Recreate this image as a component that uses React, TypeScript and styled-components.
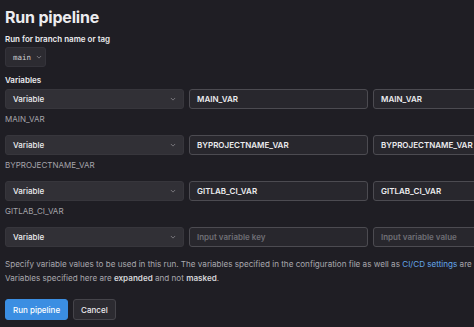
import React from 'react'
import styled, { createGlobalStyle } from 'styled-components'

type VariableRow = {
  key: string
  value: string
  showName: boolean
}

const rows: VariableRow[] = [
  { key: 'MAIN_VAR', value: 'MAIN_VAR', showName: true },
  { key: 'BYPROJECTNAME_VAR', value: 'BYPROJECTNAME_VAR', showName: true },
  { key: 'GITLAB_CI_VAR', value: 'GITLAB_CI_VAR', showName: true },
  { key: '', value: '', showName: false },
]

const GlobalStyle = createGlobalStyle`
  html, body {
    margin: 0;
    background: #1f1e24;
    overflow: hidden;
  }
  body {
    font-family: Inter, "Noto Sans", sans-serif;
    color: #ececef;
  }
`

const Page = styled.div`
  width: 560px;
  height: 327px;
  padding: 0 5px;
  box-sizing: border-box;
  background: #1f1e24;
`

const Title = styled.h1`
  margin: 0;
  padding-top: 7px;
  font-size: 16px;
  line-height: 20px;
  font-weight: 700;
  color: #ececef;
  letter-spacing: -0.2px;
`

const Label = styled.div<{ $top: number }>`
  margin-top: ${(p) => p.$top}px;
  font-size: 8px;
  line-height: 12px;
  font-weight: 600;
  color: #ececef;
`

const BranchSelect = styled.div`
  margin-top: 2px;
  width: 41px;
  height: 20px;
  box-sizing: border-box;
  display: flex;
  align-items: center;
  gap: 5px;
  padding-left: 7px;
  background: #2c2b31;
  border: 1px solid #34333a;
  border-radius: 3px;
  font-family: "DejaVu Sans Mono", "Liberation Mono", monospace;
  font-size: 7.5px;
  color: #cfcfd3;
`

const VarBlock = styled.div<{ $named: boolean }>`
  margin-top: ${(p) => (p.$named ? 3 : 2)}px;
  margin-bottom: ${(p) => (p.$named ? 10 : 0)}px;
`

const Row = styled.div`
  display: grid;
  grid-template-columns: 179px 179px 179px;
  gap: 5px;
`

const Field = styled.div<{ $select?: boolean; $placeholder?: boolean }>`
  height: 20px;
  box-sizing: border-box;
  display: flex;
  align-items: center;
  justify-content: space-between;
  padding: 0 7px;
  background: ${(p) => (p.$select ? '#313036' : '#28272d')};
  border: 1px solid ${(p) => (p.$select ? '#37363c' : '#4c4b51')};
  border-radius: 3px;
  font-size: 8px;
  font-weight: ${(p) => (p.$select ? 500 : 600)};
  color: ${(p) => (p.$placeholder ? '#6f6e75' : '#ececef')};
`

const VarName = styled.div`
  margin-top: 4px;
  font-size: 8px;
  line-height: 12px;
  color: #a5a4aa;
`

const Help = styled.p`
  margin: 10px 0 0;
  font-size: 8.1px;
  line-height: 14px;
  color: #a9a8ae;
  white-space: nowrap;

  & b {
    font-weight: 600;
    color: #d6d6da;
  }
  & a {
    color: #63a6e9;
    text-decoration: none;
  }
`

const Actions = styled.div`
  display: flex;
  gap: 5px;
  margin-top: 14px;
`

const Button = styled.button<{ $primary?: boolean }>`
  height: 21px;
  padding: 0 7px;
  border-radius: 3px;
  font-family: Inter, "Noto Sans", sans-serif;
  font-size: 8px;
  font-weight: 500;
  color: ${(p) => (p.$primary ? '#ffffff' : '#ececef')};
  background: ${(p) => (p.$primary ? '#3b8ee2' : '#2c2b31')};
  border: 1px solid ${(p) => (p.$primary ? '#3b8ee2' : '#45444a')};
`

const Chevron = () => (
  <svg width="6" height="6" viewBox="0 0 16 16" fill="none">
    <path d="M3 6l5 5 5-5" stroke="#8d8c92" strokeWidth="2" strokeLinecap="round" strokeLinejoin="round" />
  </svg>
)

export default function App() {
  return (
    <Page>
      <GlobalStyle />
      <Title>Run pipeline</Title>
      <Label $top={6}>Run for branch name or tag</Label>
      <BranchSelect>
        main <Chevron />
      </BranchSelect>
      <Label $top={7}>Variables</Label>
      {rows.map((row, i) => (
        <VarBlock key={i} $named={row.showName}>
          <Row>
            <Field $select>
              Variable <Chevron />
            </Field>
            <Field $placeholder={!row.key}>{row.key || 'Input variable key'}</Field>
            <Field $placeholder={!row.value}>{row.value || 'Input variable value'}</Field>
          </Row>
          {row.showName && <VarName>{row.key}</VarName>}
        </VarBlock>
      ))}
      <Help>
        Specify variable values to be used in this run. The variables specified in the configuration file as well as{' '}
        <a href="#">CI/CD settings</a> are used by default.
        <br />
        Variables specified here are <b>expanded</b> and not <b>masked</b>.
      </Help>
      <Actions>
        <Button $primary>Run pipeline</Button>
        <Button>Cancel</Button>
      </Actions>
    </Page>
  )
}
